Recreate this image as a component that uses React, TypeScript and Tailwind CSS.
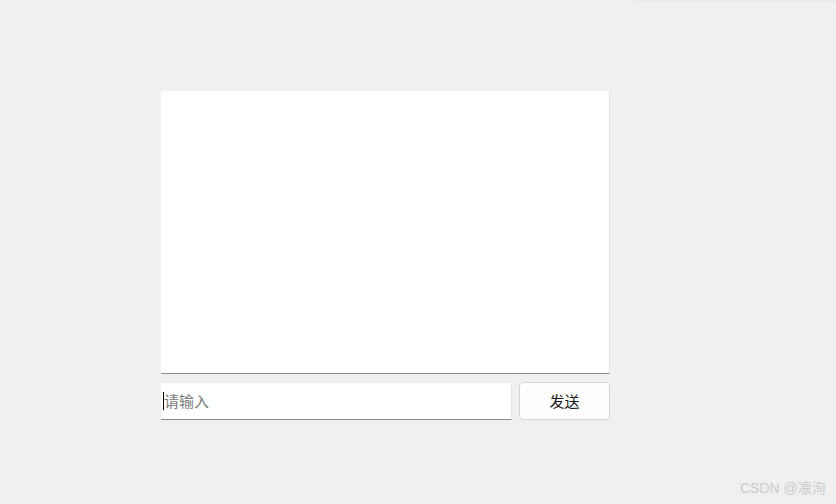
import React from "react";

export default function App() {
  return (
    <div className="relative w-[836px] h-[504px] bg-[#f0f0f0] overflow-hidden font-['Liberation_Sans','Noto_Sans_CJK_SC',sans-serif]">
      <div className="absolute top-0 right-0 w-[200px] h-[4px] bg-gradient-to-b from-[#e8e8e8] to-transparent" />
      <div className="pl-[161px] pt-[91px] flex flex-col w-[610px]">
        <div className="h-[283px] bg-white border-b border-b-[#8a8a8a] border-r border-r-[#e3e3e3]" />
        <div className="mt-[8px] flex gap-[7px] h-[38px]">
          <div className="w-[351px] h-[38px] bg-white border-b border-b-[#8a8a8a] border-t border-t-[#ececec] border-r border-r-[#e3e3e3] flex items-center">
            <div className="w-[1px] h-[18px] bg-black ml-[2px]" />
            <span className="text-[15px] text-[#7a7a7a] leading-none">请输入</span>
          </div>
          <div className="w-[91px] h-[38px] bg-[#fdfdfd] border border-[#d3d3d3] rounded-[4px] flex items-center justify-center">
            <span className="text-[15px] text-[#1a1a1a] leading-none">发送</span>
          </div>
        </div>
      </div>
      <div className="absolute left-[740px] top-[481px] text-[14px] text-[#cacaca] leading-none whitespace-nowrap">
        CSDN @凛洵
      </div>
    </div>
  );
}
